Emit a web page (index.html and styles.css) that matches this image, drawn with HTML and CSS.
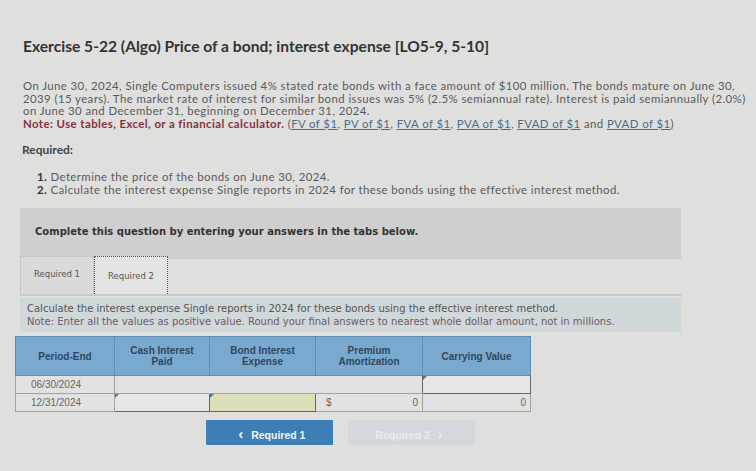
FILE: index.html
```html
<!DOCTYPE html>
<html lang="en">
<head>
    <meta charset="UTF-8">
    <title>Exercise 5-22</title>
    <link rel="stylesheet" href="styles.css">
</head>
<body>
<div class="page">
    <h1 class="title">Exercise 5-22 (Algo) Price of a bond; interest expense [LO5-9, 5-10]</h1>

    <p class="problem">
        On June 30, 2024, Single Computers issued 4% stated rate bonds with a face amount of $100 million. The bonds mature on June 30,<br>
        2039 (15 years). The market rate of interest for similar bond issues was 5% (2.5% semiannual rate). Interest is paid semiannually (2.0%)<br>
        on June 30 and December 31, beginning on December 31, 2024.<br>
        <span class="note">Note: Use tables, Excel, or a financial calculator.</span>
        <span class="links">(<a>FV of $1</a>, <a>PV of $1</a>, <a>FVA of $1</a>, <a>PVA of $1</a>, <a>FVAD of $1</a> and <a>PVAD of $1</a>)</span>
    </p>

    <h2 class="required">Required:</h2>
    <ol class="tasks">
        <li><b>1.</b> Determine the price of the bonds on June 30, 2024.</li>
        <li><b>2.</b> Calculate the interest expense Single reports in 2024 for these bonds using the effective interest method.</li>
    </ol>

    <div class="complete">Complete this question by entering your answers in the tabs below.</div>

    <div class="tabs">
        <div class="tab">Required 1</div>
        <div class="tab active">Required 2</div>
    </div>

    <div class="instructions">
        <div>Calculate the interest expense Single reports in 2024 for these bonds using the effective interest method.</div>
        <div class="instr-note">Note: Enter all the values as positive value. Round your final answers to nearest whole dollar amount, not in millions.</div>
    </div>

    <table class="schedule">
        <thead>
            <tr>
                <th class="c1">Period-End</th>
                <th class="c2">Cash Interest<br>Paid</th>
                <th class="c3">Bond Interest<br>Expense</th>
                <th class="c4">Premium<br>Amortization</th>
                <th class="c5">Carrying Value</th>
            </tr>
        </thead>
        <tbody>
            <tr>
                <td class="date">06/30/2024</td>
                <td class="blank"></td>
                <td class="blank"></td>
                <td class="blank"></td>
                <td class="input"><span class="flag"></span></td>
            </tr>
            <tr>
                <td class="date">12/31/2024</td>
                <td class="input"><span class="flag"></span></td>
                <td class="input green"><span class="flag"></span></td>
                <td class="num"><span class="cur">$</span>0</td>
                <td class="num">0</td>
            </tr>
        </tbody>
    </table>

    <div class="nav">
        <div class="btn prev"><span class="chev">&lsaquo;</span> Required 1</div>
        <div class="btn next">Required 2 <span class="chev">&rsaquo;</span></div>
    </div>
</div>
</body>
</html>
```

FILE: styles.css
```css
html, body {
    margin: 0;
    padding: 0;
}

body {
    background: #dfdfde;
    color: #505050;
    font-family: Lato, "Open Sans", sans-serif;
    width: 756px;
    height: 471px;
    overflow: hidden;
}

.page {
    padding: 36px 0 0 20px;
}

.title {
    margin: 0 0 0 3px;
    font-size: 15.6px;
    font-weight: bold;
    color: #333;
    line-height: 20px;
}

.problem {
    margin: 24px 0 0 3px;
    width: 740px;
    white-space: nowrap;
    font-size: 11.4px;
    letter-spacing: 0.42px;
    line-height: 12.6px;
    color: #5a5a5a;
}

.note {
    color: #8a3040;
    font-weight: bold;
}

.links a {
    color: #4a6d8c;
    text-decoration: underline;
}

.required {
    margin: 12px 0 0 2px;
    font-size: 12px;
    font-weight: bold;
    color: #444;
}

.tasks {
    list-style: none;
    margin: 14px 0 0 17px;
    padding: 0;
    font-size: 11.4px;
    letter-spacing: 0.42px;
    line-height: 12.5px;
    color: #5a5a5a;
}

.tasks b {
    color: #333;
}

.complete {
    box-sizing: border-box;
    width: 661px;
    height: 51px;
    margin-top: 12px;
    padding: 18px 0 0 15px;
    background: #cfcfcf;
    font-family: "DejaVu Sans", Verdana, sans-serif;
    font-size: 10px;
    font-weight: bold;
    color: #333;
}

.tabs {
    display: flex;
    width: 661px;
    height: 38px;
    margin-top: -3px;
    border-bottom: 2px solid #c9c9c9;
}

.tab {
    box-sizing: border-box;
    width: 74px;
    padding-top: 12px;
    text-align: center;
    font-family: "DejaVu Sans", Verdana, sans-serif;
    font-size: 8.5px;
    color: #555;
    background: #dadada;
    border: 1px solid #c8c8c8;
    border-bottom: none;
}

.tab.active {
    background: #e4e4e4;
    border: 1px dotted #555;
    border-bottom: none;
    padding-top: 14px;
}

.instructions {
    box-sizing: border-box;
    width: 661px;
    height: 34px;
    margin-top: 2px;
    padding: 5px 0 0 7px;
    background: #d0d8da;
    font-family: "DejaVu Sans", Verdana, sans-serif;
    font-size: 10px;
    line-height: 12.5px;
    color: #555;
}

.instr-note {
    color: #6f5a66;
}

.schedule {
    table-layout: fixed;
    width: 510px;
    border-collapse: collapse;
    margin: 4px 0 0 -5px;
    font-family: "Liberation Sans", Arial, sans-serif;
}

.schedule th {
    height: 38px;
    padding: 0;
    background: #7aa9cf;
    border: 1px solid #5e8cb3;
    font-size: 10px;
    font-weight: bold;
    color: #30465c;
    line-height: 11px;
    vertical-align: middle;
}

.c1 { width: 98px; }
.c2 { width: 94px; }
.c3 { width: 105px; }
.c4 { width: 106px; }
.c5 { width: 107px; }

.schedule td {
    height: 17px;
    padding: 0 4px;
    border: 1px solid #a2a2a2;
    background: #e2e2e2;
    font-size: 10px;
    color: #666;
    position: relative;
}

.schedule td.blank {
    border-left: none;
    border-right: none;
}

.schedule td.date {
    padding-left: 15px;
}

.schedule td.input {
    border: 1px solid #666;
    background: #e6e6e6;
}

.schedule td.green {
    background: #dcdfb8;
}

.flag {
    position: absolute;
    top: 0;
    left: 0;
    width: 0;
    height: 0;
    border-top: 4px solid #4a76a8;
    border-right: 4px solid transparent;
}

.schedule td.num {
    text-align: right;
}

.cur {
    float: left;
    padding-left: 6px;
}

.nav {
    display: flex;
    gap: 15px;
    margin: 8px 0 0 186px;
}

.btn {
    box-sizing: border-box;
    width: 127px;
    height: 25px;
    padding-top: 6px;
    text-align: center;
    font-family: "Liberation Sans", Arial, sans-serif;
    font-size: 10.5px;
    font-weight: bold;
    border-radius: 1px;
}

.btn.prev {
    background: #3d7fb4;
    color: #f2f6fa;
}

.btn.next {
    background: #d3d8dc;
    color: #e6ebef;
}

.chev {
    font-size: 14px;
    margin: 0 5px;
}
```
